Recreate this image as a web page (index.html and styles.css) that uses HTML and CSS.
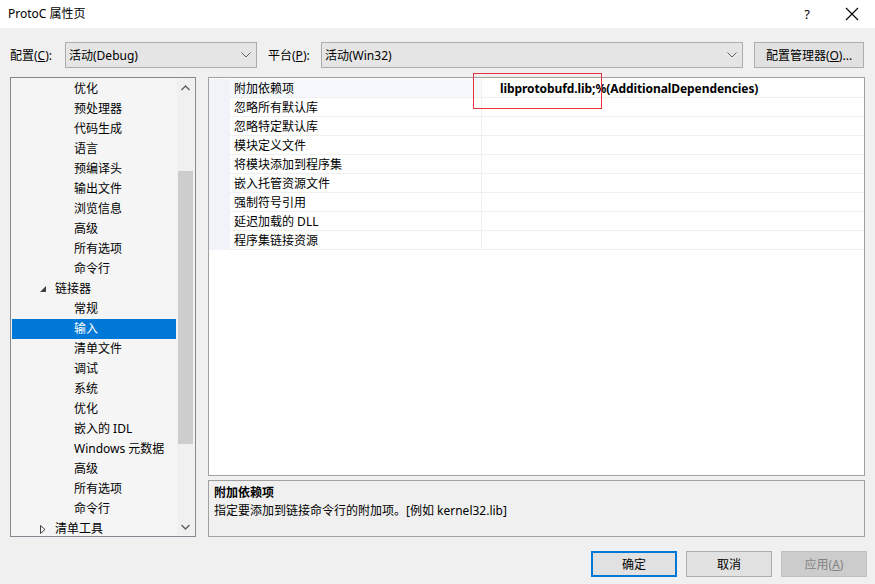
FILE: index.html
```html
<!DOCTYPE html>
<html>
<head>
<meta charset="utf-8">
<link rel="stylesheet" href="styles.css">
</head>
<body>
<div class="window">
  <div class="titlebar">
    <span class="title">ProtoC 属性页</span>
    <span class="tb-help">?</span>
    <span class="tb-close"><svg width="14" height="14" viewBox="0 0 14 14"><path d="M1 1L13 13M13 1L1 13" stroke="#000" stroke-width="1.1" fill="none"/></svg></span>
  </div>
  <div class="toolbar">
    <span class="label">配置(<u>C</u>):</span>
    <div class="combo combo-config"><span>活动(Debug)</span><svg class="chev" width="10" height="6" viewBox="0 0 10 6"><path d="M0.5 0.5L5 5L9.5 0.5" stroke="#606060" fill="none"/></svg></div>
    <span class="label label-plat">平台(<u>P</u>):</span>
    <div class="combo combo-plat"><span>活动(Win32)</span><svg class="chev" width="10" height="6" viewBox="0 0 10 6"><path d="M0.5 0.5L5 5L9.5 0.5" stroke="#606060" fill="none"/></svg></div>
    <div class="btn btn-mgr">配置管理器(<u>O</u>)...</div>
  </div>
  <div class="main">
    <div class="tree">
      <div class="tree-items">
        <div class="ti l2">优化</div>
        <div class="ti l2">预处理器</div>
        <div class="ti l2">代码生成</div>
        <div class="ti l2">语言</div>
        <div class="ti l2">预编译头</div>
        <div class="ti l2">输出文件</div>
        <div class="ti l2">浏览信息</div>
        <div class="ti l2">高级</div>
        <div class="ti l2">所有选项</div>
        <div class="ti l2">命令行</div>
        <div class="ti l1"><svg class="exp" width="6" height="6" viewBox="0 0 6 6"><path d="M6 0L6 6L0 6Z" fill="#404040"/></svg>链接器</div>
        <div class="ti l2">常规</div>
        <div class="ti l2 sel">输入</div>
        <div class="ti l2">清单文件</div>
        <div class="ti l2">调试</div>
        <div class="ti l2">系统</div>
        <div class="ti l2">优化</div>
        <div class="ti l2">嵌入的 IDL</div>
        <div class="ti l2">Windows 元数据</div>
        <div class="ti l2">高级</div>
        <div class="ti l2">所有选项</div>
        <div class="ti l2">命令行</div>
        <div class="ti l1"><svg class="exp" width="6" height="9" viewBox="0 0 6 9"><path d="M0.5 0.5L5 4.5L0.5 8.5Z" stroke="#404040" fill="none"/></svg>清单工具</div>
      </div>
      <div class="vscroll">
        <div class="sarrow"><svg width="9" height="6" viewBox="0 0 9 6"><path d="M0.5 5L4.5 1L8.5 5" stroke="#606060" stroke-width="1.4" fill="none"/></svg></div>
        <div class="strack"><div class="sthumb"></div></div>
        <div class="sarrow"><svg width="9" height="6" viewBox="0 0 9 6"><path d="M0.5 1L4.5 5L8.5 1" stroke="#606060" stroke-width="1.4" fill="none"/></svg></div>
      </div>
    </div>
    <div class="right">
      <div class="grid">
        <div class="row first"><div class="gut"></div><div class="name">附加依赖项</div><div class="val">libprotobufd.lib;%(AdditionalDependencies)</div></div>
        <div class="row"><div class="gut"></div><div class="name">忽略所有默认库</div><div class="val"></div></div>
        <div class="row"><div class="gut"></div><div class="name">忽略特定默认库</div><div class="val"></div></div>
        <div class="row"><div class="gut"></div><div class="name">模块定义文件</div><div class="val"></div></div>
        <div class="row"><div class="gut"></div><div class="name">将模块添加到程序集</div><div class="val"></div></div>
        <div class="row"><div class="gut"></div><div class="name">嵌入托管资源文件</div><div class="val"></div></div>
        <div class="row"><div class="gut"></div><div class="name">强制符号引用</div><div class="val"></div></div>
        <div class="row"><div class="gut"></div><div class="name">延迟加载的 DLL</div><div class="val"></div></div>
        <div class="row"><div class="gut"></div><div class="name">程序集链接资源</div><div class="val"></div></div>
        <div class="redbox"></div>
      </div>
      <div class="desc">
        <div class="desc-title">附加依赖项</div>
        <div class="desc-text">指定要添加到链接命令行的附加项。[例如 kernel32.lib]</div>
      </div>
    </div>
  </div>
  <div class="buttons">
    <div class="btn btn-ok">确定</div>
    <div class="btn">取消</div>
    <div class="btn btn-dis">应用(<u>A</u>)</div>
  </div>
</div>
</body>
</html>
```
FILE: styles.css
```css
* { box-sizing: border-box; }
html, body { margin: 0; padding: 0; }
body {
  width: 875px;
  height: 584px;
  background: #f0f0f0;
  font-family: "Noto Sans", "Noto Sans CJK SC", sans-serif;
  font-size: 12px;
  color: #000;
  overflow: hidden;
}
.window { width: 875px; height: 584px; display: flex; flex-direction: column; }
.titlebar {
  height: 28px;
  background: #fff;
  display: flex;
  align-items: center;
  padding-left: 8px;
}
.title { font-size: 12px; flex: 1; padding-bottom: 2px; }
.tb-help { width: 14px; font-size: 13px; margin-right: 31px; text-align: center; }
.tb-close { width: 14px; height: 14px; margin-right: 16px; display: flex; }
.toolbar {
  margin-top: 14px;
  height: 26px;
  display: flex;
  align-items: center;
  padding-left: 10px;
}
.label { width: 55px; }
.label-plat { margin-left: 11px; width: 53px; }
.combo {
  height: 26px;
  background: #e5e5e5;
  border: 1px solid #acacac;
  display: flex;
  align-items: center;
  padding-left: 3px;
  padding-right: 5px;
}
.combo span { flex: 1; }
.combo-config { width: 192px; }
.combo-plat { width: 422px; }
.chev { flex: none; }
.btn {
  height: 26px;
  width: 86px;
  background: #e1e1e1;
  border: 1px solid #adadad;
  display: flex;
  align-items: center;
  justify-content: center;
}
.btn-mgr { width: 110px; margin-left: 11px; }
.main {
  margin-top: 9px;
  height: 460px;
  display: flex;
  padding-left: 10px;
}
.tree {
  width: 186px;
  height: 460px;
  border: 1px solid #828790;
  background: #f5f5f5;
  display: flex;
  padding: 1px 1px 1px 1px;
}
.tree-items { width: 165px; display: flex; flex-direction: column; }
.ti { height: 20px; line-height: 20px; white-space: nowrap; display: flex; align-items: center; }
.ti.l2 { padding-left: 62px; }
.ti.l1 { padding-left: 28px; }
.exp { margin-right: 9px; flex: none; }
.ti.sel { background: #0078d7; color: #fff; }
.vscroll {
  width: 17px;
  margin-left: 1px;
  background: #f0f0f0;
  display: flex;
  flex-direction: column;
}
.sarrow { height: 17px; display: flex; align-items: center; justify-content: center; }
.strack { flex: 1; padding-top: 75px; padding-bottom: 74px; display: flex; padding-left: 1px; padding-right: 1px; }
.sthumb { flex: 1; background: #cdcdcd; }
.right { margin-left: 12px; width: 657px; display: flex; flex-direction: column; }
.grid {
  position: relative;
  height: 399px;
  background: #fff;
  border: 1px solid #a0a0a0;
  padding-top: 1px;
}
.row { display: flex; height: 19px; }
.gut { width: 21px; background: #f0f4f9; }
.name {
  width: 252px;
  padding-left: 4px;
  padding-top: 1px;
  line-height: 17px;
  border-bottom: 1px solid #f0f0f0;
  border-right: 1px solid #f0f0f0;
}
.row.first .name { background: #f5f8fc; }
.val {
  flex: 1;
  padding-left: 18px;
  padding-top: 1px;
  line-height: 17px;
  font-weight: bold;
  letter-spacing: -0.08px;
  border-bottom: 1px solid #f0f0f0;
}
.redbox {
  position: absolute;
  left: 264px;
  top: -5px;
  width: 129px;
  height: 36px;
  border: 1px solid #e8323c;
}
.desc {
  margin-top: 4px;
  height: 57px;
  border: 1px solid #a0a0a0;
  background: #f0f0f0;
  padding: 3px 5px;
}
.desc-title { font-weight: bold; line-height: 18px; }
.desc-text { line-height: 18px; }
.buttons {
  margin-top: 14px;
  display: flex;
  justify-content: flex-end;
  gap: 9px;
  padding-right: 8px;
}
.btn-ok { border: 2px solid #0078d7; }
.btn-dis { background: #cccccc; border-color: #bfbfbf; color: #838383; }
```
